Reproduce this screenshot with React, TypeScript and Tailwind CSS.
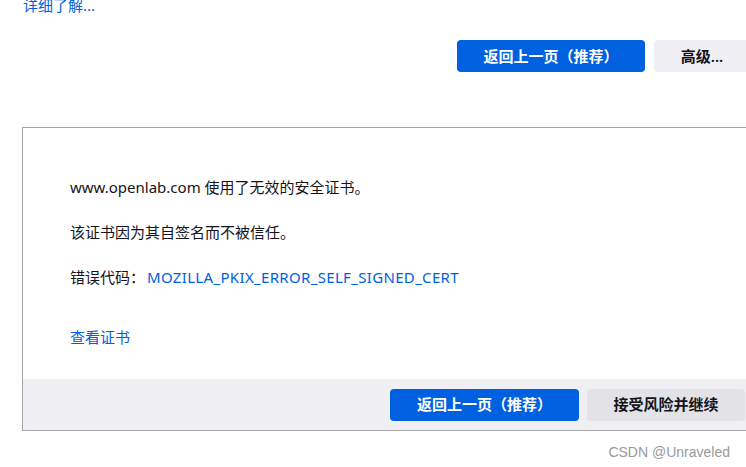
import React from "react";

export default function App() {
  const font = { fontFamily: '"Noto Sans", "Noto Sans CJK SC", sans-serif' };
  return (
    <div
      className="relative w-[746px] h-[467px] overflow-hidden bg-white text-[#15141a]"
      style={font}
    >
      <div className="mt-[-5px] pl-[23px] text-[15px] leading-[20px] text-[#0061e0]">
        详细了解...
      </div>
      <div className="mt-[25px] flex justify-end gap-[9px] mr-[-4px]">
        <button className="w-[188px] h-[32px] rounded-[4px] bg-[#0061e0] text-white text-[15px] font-semibold">
          返回上一页（推荐）
        </button>
        <button className="w-[96px] h-[32px] rounded-[4px] bg-[#f0f0f4] text-[#15141a] text-[15px] font-semibold">
          高级...
        </button>
      </div>
      <div className="mt-[55px] ml-[22px] mr-[-12px] border border-[#a5a5a5]">
        <div className="pl-[47px] pt-[49px] pb-[32px] text-[15px] leading-[20px]">
          <p>www.openlab.com 使用了无效的安全证书。</p>
          <p className="mt-[25px]">该证书因为其自签名而不被信任。</p>
          <p className="mt-[25px]">
            错误代码：
            <span className="ml-[2px] text-[#0061e0] tracking-[0.33px]">
              MOZILLA_PKIX_ERROR_SELF_SIGNED_CERT
            </span>
          </p>
          <p className="mt-[40px] text-[#0061e0]">查看证书</p>
        </div>
        <div className="bg-[#f0f0f4] h-[51px] flex items-center justify-end gap-[8px] pr-[12px]">
          <button className="w-[189px] h-[32px] rounded-[4px] bg-[#0061e0] text-white text-[15px] font-semibold">
            返回上一页（推荐）
          </button>
          <button className="w-[158px] h-[32px] rounded-[4px] bg-[#e2e2e7] text-[#15141a] text-[15px] font-semibold">
            接受风险并继续
          </button>
        </div>
      </div>
      <div
        className="absolute right-[16px] top-[443px] text-[14px] leading-[18px] text-[#9a9a9a]"
        style={{ fontFamily: '"Liberation Sans", sans-serif' }}
      >
        CSDN @Unraveled
      </div>
    </div>
  );
}
